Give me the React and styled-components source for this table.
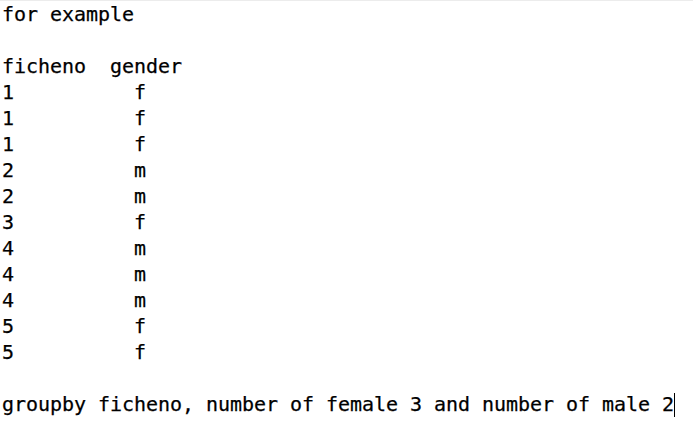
import React from 'react';
import styled, { createGlobalStyle } from 'styled-components';

const ROWS = [
  ['1', 'f'],
  ['1', 'f'],
  ['1', 'f'],
  ['2', 'm'],
  ['2', 'm'],
  ['3', 'f'],
  ['4', 'm'],
  ['4', 'm'],
  ['4', 'm'],
  ['5', 'f'],
  ['5', 'f'],
];

const GlobalStyle = createGlobalStyle`
  html, body {
    margin: 0;
    padding: 0;
    background: #ffffff;
  }
`;

const Editor = styled.div`
  width: 693px;
  height: 437px;
  box-sizing: border-box;
  border-top: 1px solid #ececec;
  padding: 0 0 0 2px;
  font-family: 'DejaVu Sans Mono', 'Liberation Mono', monospace;
  font-size: 20px;
  line-height: 26px;
  letter-spacing: -0.04px;
  color: #000000;
  -webkit-text-stroke: 0.25px #000;
  overflow: hidden;
`;

const Line = styled.div`
  white-space: pre;
  height: 26px;
`;

const Cell = styled.span`
  display: inline-block;
  width: ${(p) => p.cols * 12}px;
  white-space: pre;
`;

const Caret = styled.span`
  display: inline-block;
  width: 1px;
  height: 24px;
  background: #000;
  vertical-align: -6px;
`;

const App = () => (
  <>
    <GlobalStyle />
    <Editor>
      <Line>for example</Line>
      <Line />
      <Line>
        <Cell cols={9}>ficheno</Cell>gender
      </Line>
      {ROWS.map(([no, g], i) => (
        <Line key={i}>
          <Cell cols={11}>{no}</Cell>
          {g}
        </Line>
      ))}
      <Line />
      <Line>
        groupby ficheno, number of female 3 and number of male 2
        <Caret />
      </Line>
    </Editor>
  </>
);

export default App;
